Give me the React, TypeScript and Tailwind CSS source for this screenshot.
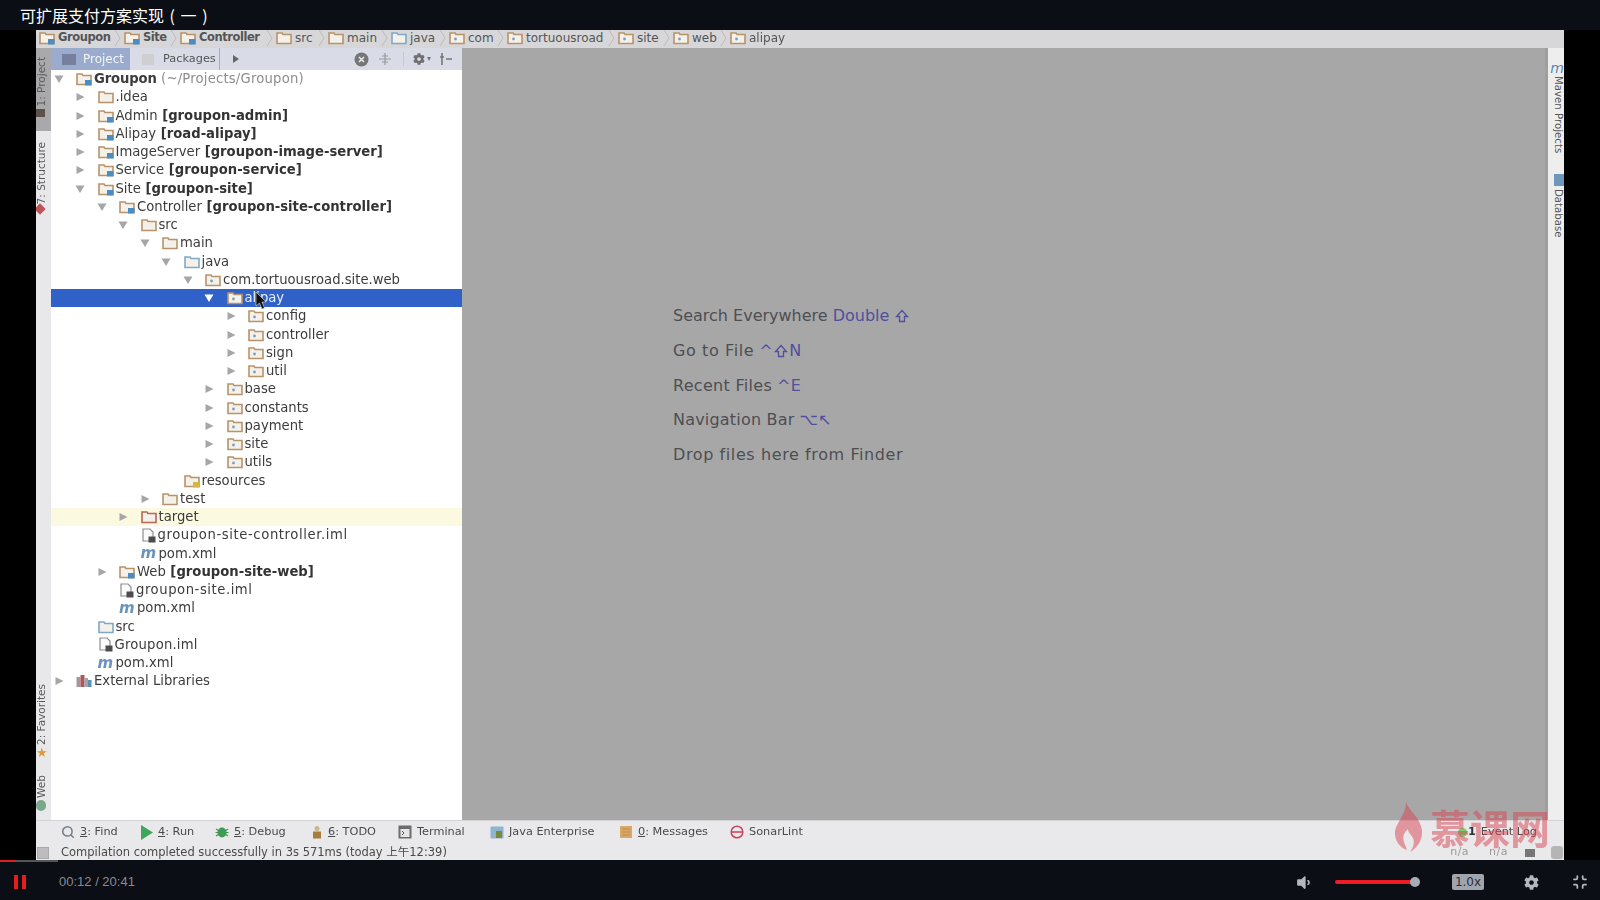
import type { ReactNode } from "react";
import { Minimize, Search } from "lucide-react";
import { FaCog, FaVolumeDown } from "react-icons/fa";

type FolderKind = "plain" | "module" | "package" | "resources";

// IDE folder icon: outline with a tab, badge depends on the kind
function Folder({ color = "#b8936a", kind = "plain" }: { color?: string; kind?: FolderKind }) {
  return (
    <svg width="16" height="14" viewBox="0 0 16 14" className="shrink-0">
      <path d="M1 12.5V2h5l1 1.5h8v9z" fill="#f4f1ea" stroke={color} strokeWidth="1.6" />
      {kind === "module" && <rect x="9" y="8" width="6.5" height="5.5" fill="#4a8cc4" />}
      {kind === "resources" && <rect x="9" y="8" width="6.5" height="5.5" fill="#d8b53c" />}
      {kind === "package" && <circle cx="6.5" cy="8" r="1.4" fill="#7b9fc0" />}
    </svg>
  );
}

function Arrow({ open, selected }: { open?: boolean; selected?: boolean }) {
  const fill = selected ? "#ffffff" : "#a6a6a6";
  return (
    <svg width="10" height="10" viewBox="0 0 10 10" className="shrink-0">
      {open ? <path d="M0.5 1.5h9L5 9z" fill={fill} /> : <path d="M1.5 1l8 4-8 4z" fill={fill} />}
    </svg>
  );
}

function ImlIcon() {
  return (
    <svg width="15" height="15" viewBox="0 0 15 15" className="shrink-0">
      <path d="M2 1h7l3 3v9H2z" fill="#fbfbfb" stroke="#8d8d8d" strokeWidth="1.2" />
      <rect x="7.5" y="8.5" width="7" height="6" fill="#4c4c4c" />
    </svg>
  );
}

function PomIcon() {
  return (
    <span className="w-[16px] shrink-0 text-[15px] leading-none font-bold italic text-[#6b93bb]">m</span>
  );
}

function LibIcon() {
  return (
    <svg width="16" height="14" viewBox="0 0 16 14" className="shrink-0">
      <rect x="0.5" y="3" width="4" height="10" fill="#a3979a" />
      <rect x="4.5" y="1" width="4" height="12" fill="#b4545a" />
      <rect x="8.5" y="4" width="3.5" height="9" fill="#a3a3a8" />
      <rect x="12" y="6" width="3.5" height="7" fill="#5b8fbd" />
    </svg>
  );
}

type Row = {
  level: number;
  name: string;
  strong?: boolean;
  spacing?: string;
  bold?: string;
  dim?: string;
  arrow?: "open" | "closed";
  icon: "folder" | "iml" | "pom" | "lib";
  color?: string;
  kind?: FolderKind;
  selected?: boolean;
  marked?: boolean;
};

const brown = "#b8936a";
const blue = "#7fa8c9";

const rows: Row[] = [
  { level: 0, name: "Groupon", strong: true, dim: "(~/Projects/Groupon)", arrow: "open", icon: "folder", kind: "module" },
  { level: 1, name: ".idea", arrow: "closed", icon: "folder" },
  { level: 1, name: "Admin", bold: "[groupon-admin]", arrow: "closed", icon: "folder", kind: "module" },
  { level: 1, name: "Alipay", bold: "[road-alipay]", arrow: "closed", icon: "folder", kind: "module" },
  { level: 1, name: "ImageServer", bold: "[groupon-image-server]", arrow: "closed", icon: "folder", kind: "module" },
  { level: 1, name: "Service", bold: "[groupon-service]", arrow: "closed", icon: "folder", kind: "module" },
  { level: 1, name: "Site", bold: "[groupon-site]", arrow: "open", icon: "folder", kind: "module" },
  { level: 2, name: "Controller", bold: "[groupon-site-controller]", arrow: "open", icon: "folder", kind: "module" },
  { level: 3, name: "src", arrow: "open", icon: "folder" },
  { level: 4, name: "main", arrow: "open", icon: "folder" },
  { level: 5, name: "java", arrow: "open", icon: "folder", color: blue },
  { level: 6, name: "com.tortuousroad.site.web", arrow: "open", icon: "folder", kind: "package" },
  { level: 7, name: "alipay", arrow: "open", icon: "folder", kind: "package", selected: true },
  { level: 8, name: "config", arrow: "closed", icon: "folder", kind: "package" },
  { level: 8, name: "controller", arrow: "closed", icon: "folder", kind: "package" },
  { level: 8, name: "sign", arrow: "closed", icon: "folder", kind: "package" },
  { level: 8, name: "util", arrow: "closed", icon: "folder", kind: "package" },
  { level: 7, name: "base", arrow: "closed", icon: "folder", kind: "package" },
  { level: 7, name: "constants", arrow: "closed", icon: "folder", kind: "package" },
  { level: 7, name: "payment", arrow: "closed", icon: "folder", kind: "package" },
  { level: 7, name: "site", arrow: "closed", icon: "folder", kind: "package" },
  { level: 7, name: "utils", arrow: "closed", icon: "folder", kind: "package" },
  { level: 5, name: "resources", icon: "folder", kind: "resources" },
  { level: 4, name: "test", arrow: "closed", icon: "folder" },
  { level: 3, name: "target", arrow: "closed", icon: "folder", color: "#b8655a", marked: true },
  { level: 3, name: "groupon-site-controller.iml", spacing: "tracking-[0.6px]", icon: "iml" },
  { level: 3, name: "pom.xml", icon: "pom" },
  { level: 2, name: "Web", bold: "[groupon-site-web]", arrow: "closed", icon: "folder", kind: "module" },
  { level: 2, name: "groupon-site.iml", spacing: "tracking-[0.55px]", icon: "iml" },
  { level: 2, name: "pom.xml", icon: "pom" },
  { level: 1, name: "src", icon: "folder", color: blue },
  { level: 1, name: "Groupon.iml", spacing: "tracking-[0.2px]", icon: "iml" },
  { level: 1, name: "pom.xml", icon: "pom" },
  { level: 0, name: "External Libraries", arrow: "closed", icon: "lib" },
];

function TreeRow({ row }: { row: Row }) {
  const bg = row.selected ? "bg-[#2f61c8]" : row.marked ? "bg-[#fbfae0]" : "";
  const text = row.selected ? "text-[#e8eefc]" : "text-[#3c3c3c]";
  return (
    <div className={`relative flex h-[18.25px] items-center ${bg} ${text}`}>
      {/* indent comes from the row's depth */}
      <div className="flex items-center" style={{ paddingLeft: 2.5 + row.level * 21.5 }}>
        <span className="flex w-[22.5px] shrink-0 items-center">
          {row.arrow && <Arrow open={row.arrow === "open"} selected={row.selected} />}
        </span>
        {row.icon === "folder" && <Folder color={row.color ?? brown} kind={row.kind} />}
        {row.icon === "iml" && <ImlIcon />}
        {row.icon === "pom" && <PomIcon />}
        {row.icon === "lib" && <LibIcon />}
        <span className="ml-[2px] whitespace-nowrap">
          <span className={`${row.strong ? "font-bold tracking-[-0.15px]" : ""} ${row.spacing ?? ""}`}>{row.name}</span>
          {row.bold && <b className="font-bold text-[#333]"> {row.bold}</b>}
          {row.dim && <span className="tracking-[0.2px] text-[#8d8d8d]"> {row.dim}</span>}
        </span>
      </div>
      {row.selected && (
        <svg width="12" height="18" viewBox="0 0 12 18" className="absolute left-[204px] top-[3px]">
          <path d="M1 0v14l3.5-3 2.5 6 2.5-1-2.5-6H11z" fill="#111" stroke="#ddd" strokeWidth="0.6" />
        </svg>
      )}
    </div>
  );
}

const crumbs: { name: string; width: string; kind?: FolderKind; color?: string; bold?: boolean }[] = [
  { name: "Groupon", width: "w-[85px]", kind: "module", bold: true },
  { name: "Site", width: "w-[56px]", kind: "module", bold: true },
  { name: "Controller", width: "w-[96px]", kind: "module", bold: true },
  { name: "src", width: "w-[52px]" },
  { name: "main", width: "w-[63px]" },
  { name: "java", width: "w-[58px]", color: blue },
  { name: "com", width: "w-[58px]", kind: "package" },
  { name: "tortuousroad", width: "w-[111px]", kind: "package" },
  { name: "site", width: "w-[55px]", kind: "package" },
  { name: "web", width: "w-[57px]", kind: "package" },
  { name: "alipay", width: "w-[70px]", kind: "package" },
];

function Breadcrumb() {
  return (
    <div className="flex h-[18px] shrink-0 items-center bg-[#d7d7d9] pb-[2px] pl-[3px] text-[12px] text-[#555]">
      {crumbs.map((c, i) => (
        <div key={c.name} className={`flex items-center ${c.width}`}>
          <Folder color={c.color ?? brown} kind={c.kind} />
          <span className={`ml-[3px] whitespace-nowrap ${c.bold ? "text-[11.5px] font-bold tracking-[-0.45px]" : ""}`}>
            {c.name}
          </span>
          {i < crumbs.length - 1 && (
            <svg width="7" height="18" viewBox="0 0 7 18" className="ml-auto mr-[3px] shrink-0">
              <path d="M1 1l5 8-5 8" fill="none" stroke="#bcbcbe" />
            </svg>
          )}
        </div>
      ))}
    </div>
  );
}

function ProjectToolbar() {
  return (
    <div className="flex h-[22px] shrink-0 items-center bg-[#d9dce7] text-[12px]">
      <div className="flex h-full w-[79px] items-center bg-[#9aabcd] pl-[11px] text-[#f2f4f8]">
        <span className="mr-[7px] h-[11px] w-[14px] bg-[#76809e]" />
        Project
      </div>
      <div className="flex h-full w-[90px] items-center border-r border-[#a9adbb] pl-[12px] text-[11.3px] text-[#555]">
        <span className="mr-[9px] h-[11px] w-[12px] bg-[#cfcfd2]" />
        Packages
      </div>
      <svg width="8" height="10" viewBox="0 0 8 10" className="ml-[12px]">
        <path d="M1 1l6 4-6 4z" fill="#666" />
      </svg>
      <div className="ml-auto mr-[9px] flex items-center text-[#777]">
        <svg width="15" height="15" viewBox="0 0 15 15">
          <circle cx="7.5" cy="7.5" r="7" fill="#767676" />
          <path d="M5 5l5 5M10 5l-5 5" stroke="#e8e8ee" strokeWidth="1.6" />
        </svg>
        <svg width="14" height="14" viewBox="0 0 14 14" className="ml-[9px]">
          <path d="M7 1v12M1 7h12M4 4h6M4 10h6" stroke="#9a9a9a" strokeWidth="1.2" />
        </svg>
        <span className="ml-[11px] h-[14px] w-px bg-[#c4c7d1]" />
        <FaCog className="ml-[9px] h-[12px] w-[12px] text-[#6f6f6f]" />
        <span className="ml-[2px] text-[8px]">▾</span>
        <svg width="14" height="14" viewBox="0 0 14 14" className="ml-[8px]">
          <path d="M3 1v12M1 5h4M7 7h6" stroke="#777" strokeWidth="1.6" />
        </svg>
      </div>
    </div>
  );
}

function VerticalLabel({ text, className }: { text: string; className?: string }) {
  return (
    <span className={`whitespace-nowrap leading-[11px] [writing-mode:vertical-rl] ${className ?? ""}`}>{text}</span>
  );
}

function LeftStrip() {
  return (
    <div className="flex w-[15px] shrink-0 flex-col items-start bg-[#e8e8ea] text-[10.5px] text-[#5a5a5a]">
      <div className="flex h-[83px] w-[15px] flex-col items-start bg-[#a9a9ab] pt-[9px]">
        <VerticalLabel text="1: Project" className="rotate-180" />
        <span className="mt-[3px] h-[8px] w-[9px] bg-[#5d5149]" />
      </div>
      <VerticalLabel text="7: Structure" className="mt-[11px] rotate-180" />
      <span className="mt-[1px] h-[8px] w-[8px] rotate-45 bg-[#c0525a]" />
      <VerticalLabel text="2: Favorites" className="mt-auto rotate-180" />
      <span className="mt-[1px] text-[13px] leading-none text-[#dd9b3c]">★</span>
      <VerticalLabel text="Web" className="mt-[16px] rotate-180" />
      <span className="mt-[2px] mb-[9px] h-[11px] w-[10px] rounded-full bg-[#7aa88a]" />
    </div>
  );
}

function RightStrip() {
  return (
    <div className="flex w-[16px] shrink-0 flex-col items-end overflow-hidden bg-[#eeeeee] text-[10.2px] text-[#555]">
      <span className="mt-[13px] text-[14px] leading-none italic text-[#5a86b3]">m</span>
      <VerticalLabel text="Maven Projects" className="mt-[1px]" />
      <span className="mt-[21px] h-[12px] w-[10px] bg-[#6f97bb]" />
      <VerticalLabel text="Database" className="mt-[3px]" />
    </div>
  );
}

function ShiftKey() {
  return (
    <svg width="14" height="14" viewBox="0 0 14 14" className="inline-block">
      <path d="M7 1.5L1.5 7.5H4.5V12.5H9.5V7.5H12.5z" fill="none" stroke="#4f4f9c" strokeWidth="1.3" />
    </svg>
  );
}

const welcome: { label: string; spacing: string; keys?: ReactNode }[] = [
  {
    label: "Search Everywhere",
    spacing: "tracking-[0px]",
    keys: (
      <span className="flex items-center gap-[6px]">
        Double <ShiftKey />
      </span>
    ),
  },
  {
    label: "Go to File",
    spacing: "tracking-[0.6px]",
    keys: (
      <span className="flex items-center gap-[1px]">
        ^<ShiftKey />N
      </span>
    ),
  },
  { label: "Recent Files", spacing: "tracking-[0.3px]", keys: "^E" },
  { label: "Navigation Bar", spacing: "tracking-[0.2px]", keys: "⌥↖" },
  { label: "Drop files here from Finder", spacing: "tracking-[0.6px]" },
];

function EditorEmpty() {
  return (
    <div className="flex flex-1 flex-col justify-start border-r-[3px] border-[#9f9f9f] bg-[#a7a7a8] pl-[211px] pt-[251px]">
      {welcome.map((w) => (
        <div key={w.label} className={`flex h-[34.7px] items-center gap-[5px] text-[16px] text-[#4e4e52] ${w.spacing}`}>
          <span>{w.label}</span>
          {w.keys && <span className="text-[#4f4f9c]">{w.keys}</span>}
        </div>
      ))}
    </div>
  );
}

function BugIcon() {
  return (
    <svg width="14" height="14" viewBox="0 0 14 14">
      <ellipse cx="7" cy="7.5" rx="4.5" ry="5" fill="#3f9a55" />
      <path d="M1 4l3 2M13 4l-3 2M1 11l3-2M13 11l-3-2M0.5 7.5h3M10.5 7.5h3" stroke="#3f9a55" strokeWidth="1.2" />
    </svg>
  );
}

const tools: { key?: string; rest: string; width: string; icon: ReactNode }[] = [
  {
    key: "3",
    rest: ": Find",
    width: "w-[79px]",
    icon: <Search className="h-[14px] w-[14px] text-[#6f7f8e]" strokeWidth={2.6} />,
  },
  {
    key: "4",
    rest: ": Run",
    width: "w-[75px]",
    icon: (
      <svg width="13" height="15" viewBox="0 0 13 15">
        <path d="M1 0l12 7.5L1 15z" fill="#3fa75a" />
      </svg>
    ),
  },
  { key: "5", rest: ": Debug", width: "w-[94px]", icon: <BugIcon /> },
  {
    key: "6",
    rest: ": TODO",
    width: "w-[89px]",
    icon: (
      <svg width="14" height="14" viewBox="0 0 14 14">
        <circle cx="8" cy="3.5" r="2.5" fill="#c9b78c" />
        <rect x="4" y="6.5" width="8" height="7" fill="#a67d3c" />
      </svg>
    ),
  },
  {
    rest: "Terminal",
    width: "w-[92px]",
    icon: (
      <svg width="14" height="14" viewBox="0 0 14 14">
        <rect x="0.5" y="0.5" width="13" height="13" fill="#6c6c6c" />
        <rect x="2.5" y="4" width="9" height="8" fill="#e6e6e6" />
        <path d="M4 6l2 2-2 2" fill="none" stroke="#555" />
      </svg>
    ),
  },
  {
    rest: "Java Enterprise",
    width: "w-[129px]",
    icon: (
      <svg width="14" height="14" viewBox="0 0 14 14">
        <rect x="0.5" y="1.5" width="13" height="12" rx="1" fill="#8fb4cf" />
        <rect x="6" y="6" width="6" height="7" fill="#7a8a3c" />
      </svg>
    ),
  },
  {
    key: "0",
    rest: ": Messages",
    width: "w-[111px]",
    icon: (
      <svg width="14" height="14" viewBox="0 0 14 14">
        <rect x="1" y="1" width="12" height="12" fill="#d9a766" />
        <path d="M3 4h8M3 7h8M3 10h8" stroke="#c08d4c" />
      </svg>
    ),
  },
  {
    rest: "SonarLint",
    width: "w-[100px]",
    icon: (
      <svg width="14" height="14" viewBox="0 0 14 14">
        <circle cx="7" cy="7" r="5.8" fill="none" stroke="#c9485f" strokeWidth="1.6" />
        <path d="M1.5 7h11" stroke="#c9485f" strokeWidth="1.6" />
      </svg>
    ),
  },
];

function ToolBar() {
  return (
    <div className="flex h-[25px] shrink-0 items-center border-t border-[#d4d4d6] bg-[#e9e9eb] pb-[2px] pl-[25px] text-[11.3px] text-[#4a4a4a]">
      {tools.map((t) => (
        <div key={t.rest} className={`flex items-center gap-[5px] ${t.width}`}>
          {t.icon}
          <span className="whitespace-nowrap">
            {t.key && <u>{t.key}</u>}
            {t.rest}
          </span>
        </div>
      ))}
      <div className="ml-auto mr-[27px] flex items-center">
        <span className="h-[9px] w-[9px] rounded-full bg-[#6fd06f]" />
        <b className="ml-[1px] text-[#333]">1</b>
        <span className="ml-[5px]">Event Log</span>
      </div>
    </div>
  );
}

function StatusBar() {
  return (
    <div className="flex h-[15px] shrink-0 items-center bg-[#e9e9eb] text-[11.5px] text-[#4a4a4a]">
      <span className="ml-[1px] h-[12px] w-[12px] border border-[#aaa] bg-[#bdbdbf]" />
      <span className="ml-[12px] whitespace-nowrap">
        Compilation completed successfully in 3s 571ms (today 上午12:39)
      </span>
      <div className="ml-auto flex items-center text-[11px] tracking-[0.5px] text-[#9a9a9c]">
        <span>n/a</span>
        <span className="ml-[20px]">n/a</span>
        <span className="ml-[17px] h-[8px] w-[10px] bg-[#777]" />
        <span className="ml-[16px] mr-[1px] h-[13px] w-[12px] rounded-[3px] bg-[#b5b5b7]" />
      </div>
    </div>
  );
}

function Watermark() {
  return (
    <div className="pointer-events-none absolute bottom-[8px] right-[14px] flex items-center gap-[6px] opacity-50">
      <svg width="30" height="50" viewBox="0 0 30 50">
        <path
          d="M12 0c3 9 14 15 16 28 1 11-6 19-12 22 3-4 5-9 3-14-2-4-5-5-5-9-3 3-6 6-4 13l3 8C6 46 0 38 1 29 2 21 12 13 12 0z"
          fill="#d9434f"
        />
      </svg>
      <span className="whitespace-nowrap text-[40px] leading-none font-bold text-[#d9434f] font-['Noto_Sans_CJK_SC',sans-serif]">
        慕课网
      </span>
    </div>
  );
}

function PlayerBar() {
  return (
    <div className="relative flex h-[40px] shrink-0 items-center bg-[#0b0e14] pt-[4px] text-[#b4b8be]">
      <div className="absolute left-0 top-0 h-[2px] w-[58px] bg-[#555]">
        <div className="h-full w-[16px] bg-[#e02020]" />
      </div>
      <div className="ml-[14px] flex gap-[4px]">
        <span className="h-[14px] w-[4px] bg-[#e81c1c]" />
        <span className="h-[14px] w-[4px] bg-[#e81c1c]" />
      </div>
      <span className="ml-[33px] text-[13px] text-[#868b92] font-['Liberation_Sans',sans-serif]">00:12 / 20:41</span>
      <FaVolumeDown className="ml-auto h-[17px] w-[17px]" />
      <div className="relative ml-[23px] h-[4px] w-[82px] rounded-full bg-[#ee1c25]">
        <span className="absolute -right-[3px] -top-[3px] h-[10px] w-[10px] rounded-full bg-[#a8adb5]" />
      </div>
      <span className="ml-[35px] flex h-[16px] w-[32px] items-center justify-center rounded-[2px] bg-[#a0a4ac] text-[12px] text-[#2c2f35]">
        1.0x
      </span>
      <FaCog className="ml-[40px] h-[15px] w-[15px]" />
      <Minimize className="ml-[33px] mr-[12px] h-[16px] w-[16px]" strokeWidth={2.6} />
    </div>
  );
}

export default function App() {
  return (
    <div className="flex h-[900px] w-[1600px] flex-col overflow-hidden bg-black font-['DejaVu_Sans','Noto_Sans_CJK_SC',sans-serif]">
      <div className="flex h-[30px] shrink-0 items-center bg-[#0b0e14] pl-[20px] text-[16px] text-white [word-spacing:2px] font-['Noto_Sans_CJK_SC',sans-serif]">
        可扩展支付方案实现 ( 一 )
      </div>
      <div className="flex min-h-0 flex-1 px-[36px]">
        <div className="relative flex min-w-0 flex-1 flex-col overflow-hidden blur-[0.4px]">
          <Breadcrumb />
          <div className="flex min-h-0 flex-1">
            <LeftStrip />
            <div className="flex w-[411px] shrink-0 flex-col bg-white">
              <ProjectToolbar />
              <div className="text-[13.2px]">
                {rows.map((r, i) => (
                  <TreeRow key={i} row={r} />
                ))}
              </div>
            </div>
            <EditorEmpty />
            <RightStrip />
          </div>
          <ToolBar />
          <StatusBar />
          <Watermark />
        </div>
      </div>
      <PlayerBar />
    </div>
  );
}
